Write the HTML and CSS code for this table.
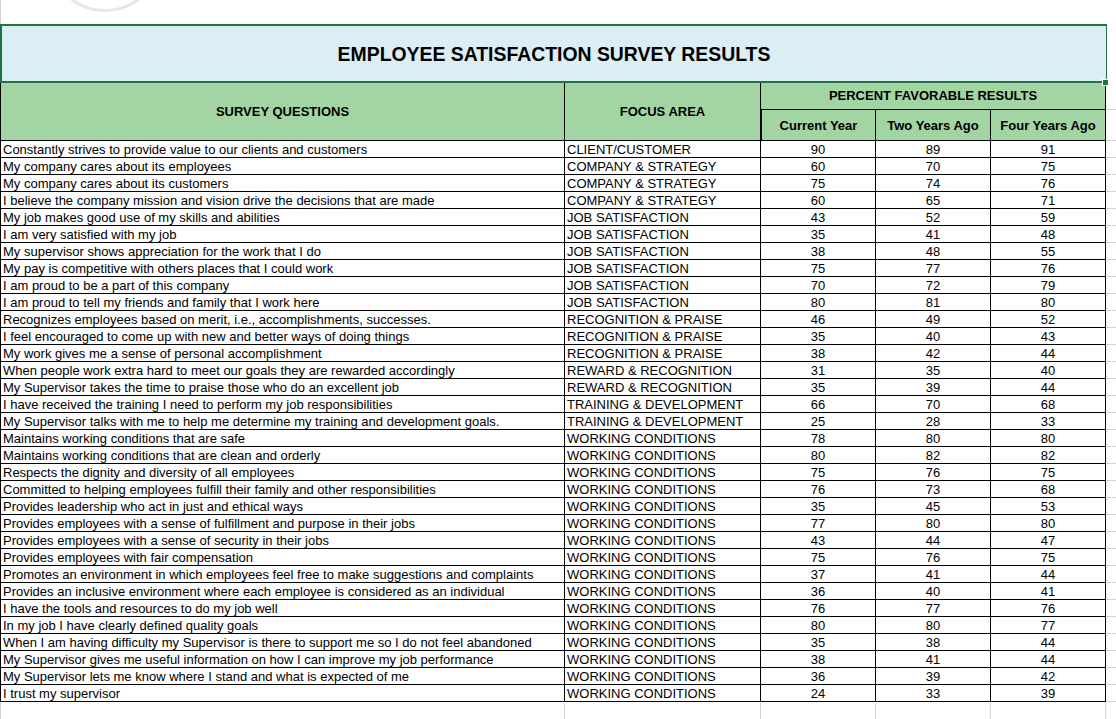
FILE: index.html
```html
<!DOCTYPE html>
<html lang="en">
<head>
  <meta charset="UTF-8">
  <meta name="viewport" content="width=device-width, initial-scale=1.0">
  <title>Employee Satisfaction Survey Results</title>
  <link rel="stylesheet" href="styles.css">
</head>
<body>
  <div class="watermark"></div>

  <div class="sheet">
    <div class="main">
      <div class="title">EMPLOYEE SATISFACTION SURVEY RESULTS</div>
      <div class="handle"></div>

      <table class="survey">
        <colgroup>
          <col class="col-q">
          <col class="col-area">
          <col class="col-num">
          <col class="col-num">
          <col class="col-num">
        </colgroup>
        <thead>
          <tr class="head-top">
            <th rowspan="2">SURVEY QUESTIONS</th>
            <th rowspan="2">FOCUS AREA</th>
            <th colspan="3">PERCENT FAVORABLE RESULTS</th>
          </tr>
          <tr class="head-sub">
            <th>Current Year</th>
            <th>Two Years Ago</th>
            <th>Four Years Ago</th>
          </tr>
        </thead>
        <tbody>
          <tr><td class="q">Constantly strives to provide value to our clients and customers</td><td class="area">CLIENT/CUSTOMER</td><td>90</td><td>89</td><td>91</td></tr>
          <tr><td class="q">My company cares about its employees</td><td class="area">COMPANY &amp; STRATEGY</td><td>60</td><td>70</td><td>75</td></tr>
          <tr><td class="q">My company cares about its customers</td><td class="area">COMPANY &amp; STRATEGY</td><td>75</td><td>74</td><td>76</td></tr>
          <tr><td class="q">I believe the company mission and vision drive the decisions that are made</td><td class="area">COMPANY &amp; STRATEGY</td><td>60</td><td>65</td><td>71</td></tr>
          <tr><td class="q">My job makes good use of my skills and abilities</td><td class="area">JOB SATISFACTION</td><td>43</td><td>52</td><td>59</td></tr>
          <tr><td class="q">I am very satisfied with my job</td><td class="area">JOB SATISFACTION</td><td>35</td><td>41</td><td>48</td></tr>
          <tr><td class="q">My supervisor shows appreciation for the work that I do</td><td class="area">JOB SATISFACTION</td><td>38</td><td>48</td><td>55</td></tr>
          <tr><td class="q">My pay is competitive with others places that I could work</td><td class="area">JOB SATISFACTION</td><td>75</td><td>77</td><td>76</td></tr>
          <tr><td class="q">I am proud to be a part of this company</td><td class="area">JOB SATISFACTION</td><td>70</td><td>72</td><td>79</td></tr>
          <tr><td class="q">I am proud to tell my friends and family that I work here</td><td class="area">JOB SATISFACTION</td><td>80</td><td>81</td><td>80</td></tr>
          <tr><td class="q">Recognizes employees based on merit, i.e., accomplishments, successes.</td><td class="area">RECOGNITION &amp; PRAISE</td><td>46</td><td>49</td><td>52</td></tr>
          <tr><td class="q">I feel encouraged to come up with new and better ways of doing things</td><td class="area">RECOGNITION &amp; PRAISE</td><td>35</td><td>40</td><td>43</td></tr>
          <tr><td class="q">My work gives me a sense of personal accomplishment</td><td class="area">RECOGNITION &amp; PRAISE</td><td>38</td><td>42</td><td>44</td></tr>
          <tr><td class="q">When people work extra hard to meet our goals they are rewarded accordingly</td><td class="area">REWARD &amp; RECOGNITION</td><td>31</td><td>35</td><td>40</td></tr>
          <tr><td class="q">My Supervisor takes the time to praise those who do an excellent job</td><td class="area">REWARD &amp; RECOGNITION</td><td>35</td><td>39</td><td>44</td></tr>
          <tr><td class="q">I have received the training I need to perform my job responsibilities</td><td class="area">TRAINING &amp; DEVELOPMENT</td><td>66</td><td>70</td><td>68</td></tr>
          <tr><td class="q">My Supervisor talks with me to help me determine my training and development goals.</td><td class="area">TRAINING &amp; DEVELOPMENT</td><td>25</td><td>28</td><td>33</td></tr>
          <tr><td class="q">Maintains working conditions that are safe</td><td class="area">WORKING CONDITIONS</td><td>78</td><td>80</td><td>80</td></tr>
          <tr><td class="q">Maintains working conditions that are clean and orderly</td><td class="area">WORKING CONDITIONS</td><td>80</td><td>82</td><td>82</td></tr>
          <tr><td class="q">Respects the dignity and diversity of all employees</td><td class="area">WORKING CONDITIONS</td><td>75</td><td>76</td><td>75</td></tr>
          <tr><td class="q">Committed to helping employees fulfill their family and other responsibilities</td><td class="area">WORKING CONDITIONS</td><td>76</td><td>73</td><td>68</td></tr>
          <tr><td class="q">Provides leadership who act in just and ethical ways</td><td class="area">WORKING CONDITIONS</td><td>35</td><td>45</td><td>53</td></tr>
          <tr><td class="q">Provides employees with a sense of fulfillment and purpose in their jobs</td><td class="area">WORKING CONDITIONS</td><td>77</td><td>80</td><td>80</td></tr>
          <tr><td class="q">Provides employees with a sense of security in their jobs</td><td class="area">WORKING CONDITIONS</td><td>43</td><td>44</td><td>47</td></tr>
          <tr><td class="q">Provides employees with fair compensation</td><td class="area">WORKING CONDITIONS</td><td>75</td><td>76</td><td>75</td></tr>
          <tr><td class="q">Promotes an environment in which employees feel free to make suggestions and complaints</td><td class="area">WORKING CONDITIONS</td><td>37</td><td>41</td><td>44</td></tr>
          <tr><td class="q">Provides an inclusive environment where each employee is considered as an individual</td><td class="area">WORKING CONDITIONS</td><td>36</td><td>40</td><td>41</td></tr>
          <tr><td class="q">I have the tools and resources to do my job well</td><td class="area">WORKING CONDITIONS</td><td>76</td><td>77</td><td>76</td></tr>
          <tr><td class="q">In my job I have clearly defined quality goals</td><td class="area">WORKING CONDITIONS</td><td>80</td><td>80</td><td>77</td></tr>
          <tr><td class="q">When I am having difficulty my Supervisor is there to support me so I do not feel abandoned</td><td class="area">WORKING CONDITIONS</td><td>35</td><td>38</td><td>44</td></tr>
          <tr><td class="q">My Supervisor gives me useful information on how I can improve my job performance</td><td class="area">WORKING CONDITIONS</td><td>38</td><td>41</td><td>44</td></tr>
          <tr><td class="q">My Supervisor lets me know where I stand and what is expected of me</td><td class="area">WORKING CONDITIONS</td><td>36</td><td>39</td><td>42</td></tr>
          <tr><td class="q">I trust my supervisor</td><td class="area">WORKING CONDITIONS</td><td>24</td><td>33</td><td>39</td></tr>
        </tbody>
      </table>

      <div class="below">
        <span></span><span></span><span></span><span></span><span></span>
      </div>
    </div>

    <div class="gutter">
      <div class="gutter-head"></div>
      <div class="gutter-rows"></div>
    </div>
  </div>
</body>
</html>
```

FILE: styles.css
```css
body {
  margin: 0;
  font-family: 'Liberation Sans', Arial, sans-serif;
  color: #000;
  background: #fff linear-gradient(to right, #d4d4d4 1px, transparent 1px);
  overflow: hidden;
}
.watermark {
  position: absolute;
  left: 48px;
  top: -102px;
  width: 108px;
  height: 108px;
  border: 3px solid #e6e6e6;
  border-radius: 50%;
}
.sheet {
  display: flex;
  padding-top: 24px;
}
.main {
  position: relative;
  width: 1106px;
}
.title {
  width: 1107px;
  height: 59px;
  box-sizing: border-box;
  border: 2px solid #217346;
  border-right-width: 1px;
  background: #daeef3;
  font-size: 19.4px;
  font-weight: bold;
  line-height: 57px;
  text-align: center;
}
.handle {
  position: absolute;
  left: 1102px;
  top: 55px;
  width: 5px;
  height: 5px;
  background: #217346;
  border: 1px solid #fff;
}
.survey {
  width: 1106px;
  table-layout: fixed;
  border-collapse: separate;
  border-spacing: 0;
  font-size: 13px;
}
.col-q { width: 565px; }
.col-area { width: 196px; }
.col-num { width: 115px; }
.survey th,
.survey td {
  padding: 0;
  border-right: 1px solid #000;
  border-bottom: 1px solid #000;
  white-space: nowrap;
  overflow: hidden;
}
.survey th:first-child,
.survey td:first-child {
  border-left: 1px solid #000;
}
.survey th {
  background: #a3d5a4;
  font-weight: bold;
  text-align: center;
  vertical-align: middle;
}
.head-top th {
  height: 25px;
  padding-bottom: 1px;
}
.head-sub th {
  height: 30px;
  border-left: none;
}
.survey td {
  height: 14px;
  padding-top: 2px;
  line-height: 14px;
  text-align: center;
}
.survey td.q,
.survey td.area {
  text-align: left;
  padding-left: 2px;
}
.below {
  display: grid;
  grid-template-columns: 565px 196px 115px 115px 115px;
  height: 18px;
}
.below span {
  border-right: 1px solid #d4d4d4;
}
.gutter {
  flex: 1;
  padding-top: 85px;
}
.gutter-head {
  height: 30px;
  border-top: 1px solid #d4d4d4;
}
.gutter-rows {
  height: 578px;
  background: repeating-linear-gradient(to bottom, #d4d4d4 0 1px, transparent 1px 17px);
}
```
